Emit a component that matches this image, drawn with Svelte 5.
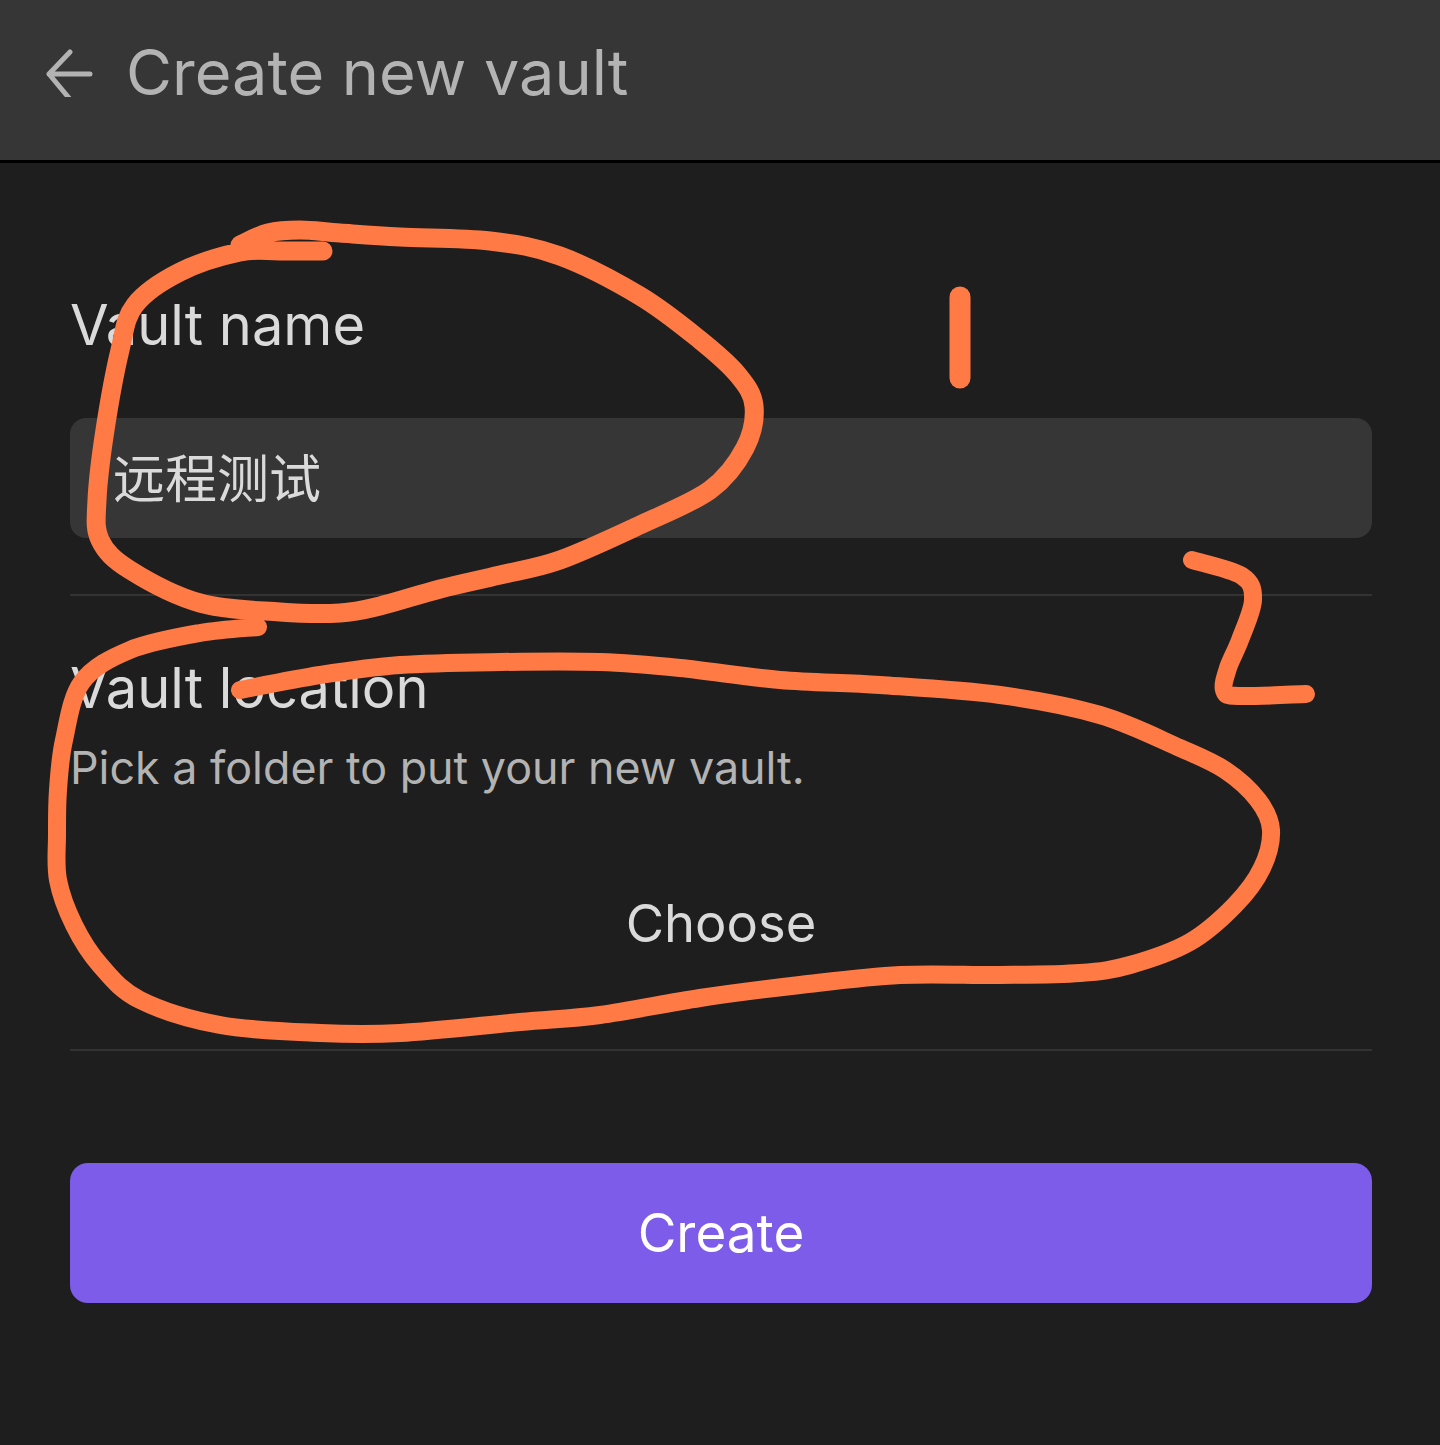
<script lang="ts">
  // hand-drawn annotations on top of the screen, in page coordinates
  const loopOne = [
    [240, 245], [268, 233], [300, 230], [340, 233], [400, 237], [490, 241], [560, 256], [640, 296], [700, 340], [738, 375],
    [754, 406], [745, 448], [710, 490], [640, 525], [560, 560], [500, 575], [440, 589], [380, 606], [340, 613],
    [280, 612], [200, 603], [130, 570], [100, 540], [97, 500], [105, 430], [120, 350], [135, 305], [180, 272],
    [240, 252], [280, 251], [323, 251]
  ];
  const loopTwo = [
    [258, 627], [200, 633], [130, 650], [82, 682], [64, 740], [58, 790], [57, 835], [58, 880], [74, 925], [100, 965], [140, 1000],
    [220, 1025], [320, 1033], [400, 1033], [520, 1022], [600, 1015], [700, 998], [800, 985], [900, 975],
    [1000, 975], [1080, 973], [1130, 965], [1190, 942], [1235, 905], [1262, 868], [1271, 830], [1258, 800], [1225, 770],
    [1180, 748], [1100, 715], [1000, 695], [880, 685], [780, 680], [680, 668], [600, 662], [500, 662],
    [400, 665], [320, 675], [240, 690]
  ];
  const digitTwo = [
    [1192, 560], [1242, 576], [1253, 600], [1240, 640], [1228, 668], [1224, 690], [1238, 696], [1306, 694]
  ];

  // catmull-rom through the points, so the marker lines stay soft
  function smooth(pts: number[][]) {
    let d = `M${pts[0][0]} ${pts[0][1]}`;
    for (let i = 0; i < pts.length - 1; i++) {
      const a = pts[i - 1] ?? pts[i];
      const b = pts[i];
      const c = pts[i + 1];
      const e = pts[i + 2] ?? c;
      const c1x = b[0] + (c[0] - a[0]) / 6;
      const c1y = b[1] + (c[1] - a[1]) / 6;
      const c2x = c[0] - (e[0] - b[0]) / 6;
      const c2y = c[1] - (e[1] - b[1]) / 6;
      d += ` C${c1x} ${c1y} ${c2x} ${c2y} ${c[0]} ${c[1]}`;
    }
    return d;
  }
</script>

<div class="page">
  <header class="topbar">
    <svg class="back" viewBox="0 0 48 48" width="48" height="48" aria-hidden="true">
      <path d="M44 25H3M24 3 3 25l20 24" />
    </svg>
    <h1>Create new vault</h1>
  </header>

  <main class="content">
    <section class="name-row">
      <div class="label">Vault name</div>
      <div class="input"><span class="value">远程测试</span></div>
    </section>

    <section class="location-row">
      <div class="label">Vault location</div>
      <div class="desc">Pick a folder to put your new vault.</div>
      <div class="choose">Choose</div>
    </section>

    <button class="create">Create</button>
  </main>

  <svg class="marks" viewBox="0 0 1440 1445" aria-hidden="true">
    <path d={smooth(loopOne)} stroke-width="19" />
    <path d={smooth(loopTwo)} stroke-width="18" />
    <path d="M960 297 L960 378" stroke-width="21" />
    <path d={smooth(digitTwo)} stroke-width="18" />
  </svg>
</div>

<style>
  :global(body) {
    background: #1e1e1e;
  }

  .page {
    position: relative;
    width: 1440px;
    height: 1445px;
    overflow: hidden;
    background: #1e1e1e;
    font-family: Inter, "Noto Sans CJK SC", sans-serif;
    color: #dadada;
  }

  .topbar {
    display: flex;
    align-items: center;
    gap: 32px;
    height: 160px;
    padding: 0 0 14px 46px;
    box-sizing: border-box;
    background: #363636;
    box-shadow: 0 3px 0 #000;
  }

  .back {
    flex: none;
    fill: none;
    stroke: #b3b3b3;
    stroke-width: 5;
    stroke-linecap: round;
    stroke-linejoin: round;
  }

  h1 {
    margin: 0 0 3px;
    font-size: 63px;
    font-weight: 400;
    line-height: 76px;
    color: #b3b3b3;
  }

  .content {
    padding: 3px 68px 0 70px;
  }

  .name-row {
    padding: 131px 0 56px;
    border-bottom: 2px solid #333;
  }

  .location-row {
    padding: 61px 0 66px;
    border-bottom: 2px solid #333;
  }

  .label {
    font-size: 56px;
    line-height: 62px;
  }

  .input {
    display: flex;
    align-items: center;
    height: 120px;
    margin-top: 62px;
    padding-left: 43px;
    border-radius: 16px;
    background: #363636;
    font-size: 52px;
  }

  .value {
    padding-bottom: 6px;
  }

  .desc {
    margin-top: 21px;
    font-size: 44.8px;
    line-height: 56px;
    color: #b3b3b3;
  }

  .choose {
    display: flex;
    align-items: center;
    justify-content: center;
    height: 120px;
    margin-top: 67px;
    font-size: 52.5px;
  }

  .create {
    display: block;
    width: 100%;
    height: 140px;
    margin-top: 112px;
    border: 0;
    border-radius: 18px;
    background: #7c5ce8;
    color: #fff;
    font-family: inherit;
    font-size: 53px;
  }

  .marks {
    position: absolute;
    inset: 0;
    width: 1440px;
    height: 1445px;
    fill: none;
    stroke: #ff7a45;
    stroke-linecap: round;
    stroke-linejoin: round;
  }
</style>
